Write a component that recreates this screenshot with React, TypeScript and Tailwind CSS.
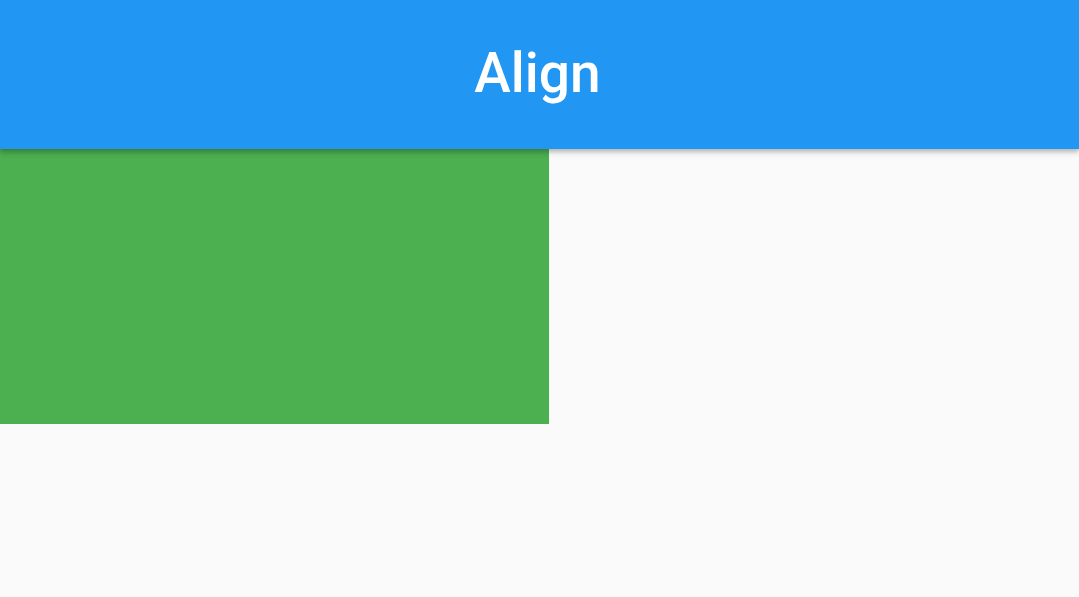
export default function App() {
  return (
    <div className="h-[597px] w-full overflow-hidden bg-[#fafafa] flex flex-col" style={{ fontFamily: 'Roboto, "Noto Sans", sans-serif' }}>
      <header className="relative z-10 h-[149px] shrink-0 bg-[#2196f3] flex items-center justify-center shadow-[0_2px_4px_rgba(0,0,0,0.16),0_4px_5px_rgba(0,0,0,0.1),0_1px_10px_rgba(0,0,0,0.08)]">
        <h1 className="text-white text-[55px] font-medium leading-none -mt-[3px] mr-[4px]">Align</h1>
      </header>
      <div className="w-[549px] h-[275px] bg-[#4caf50]" />
    </div>
  );
}
